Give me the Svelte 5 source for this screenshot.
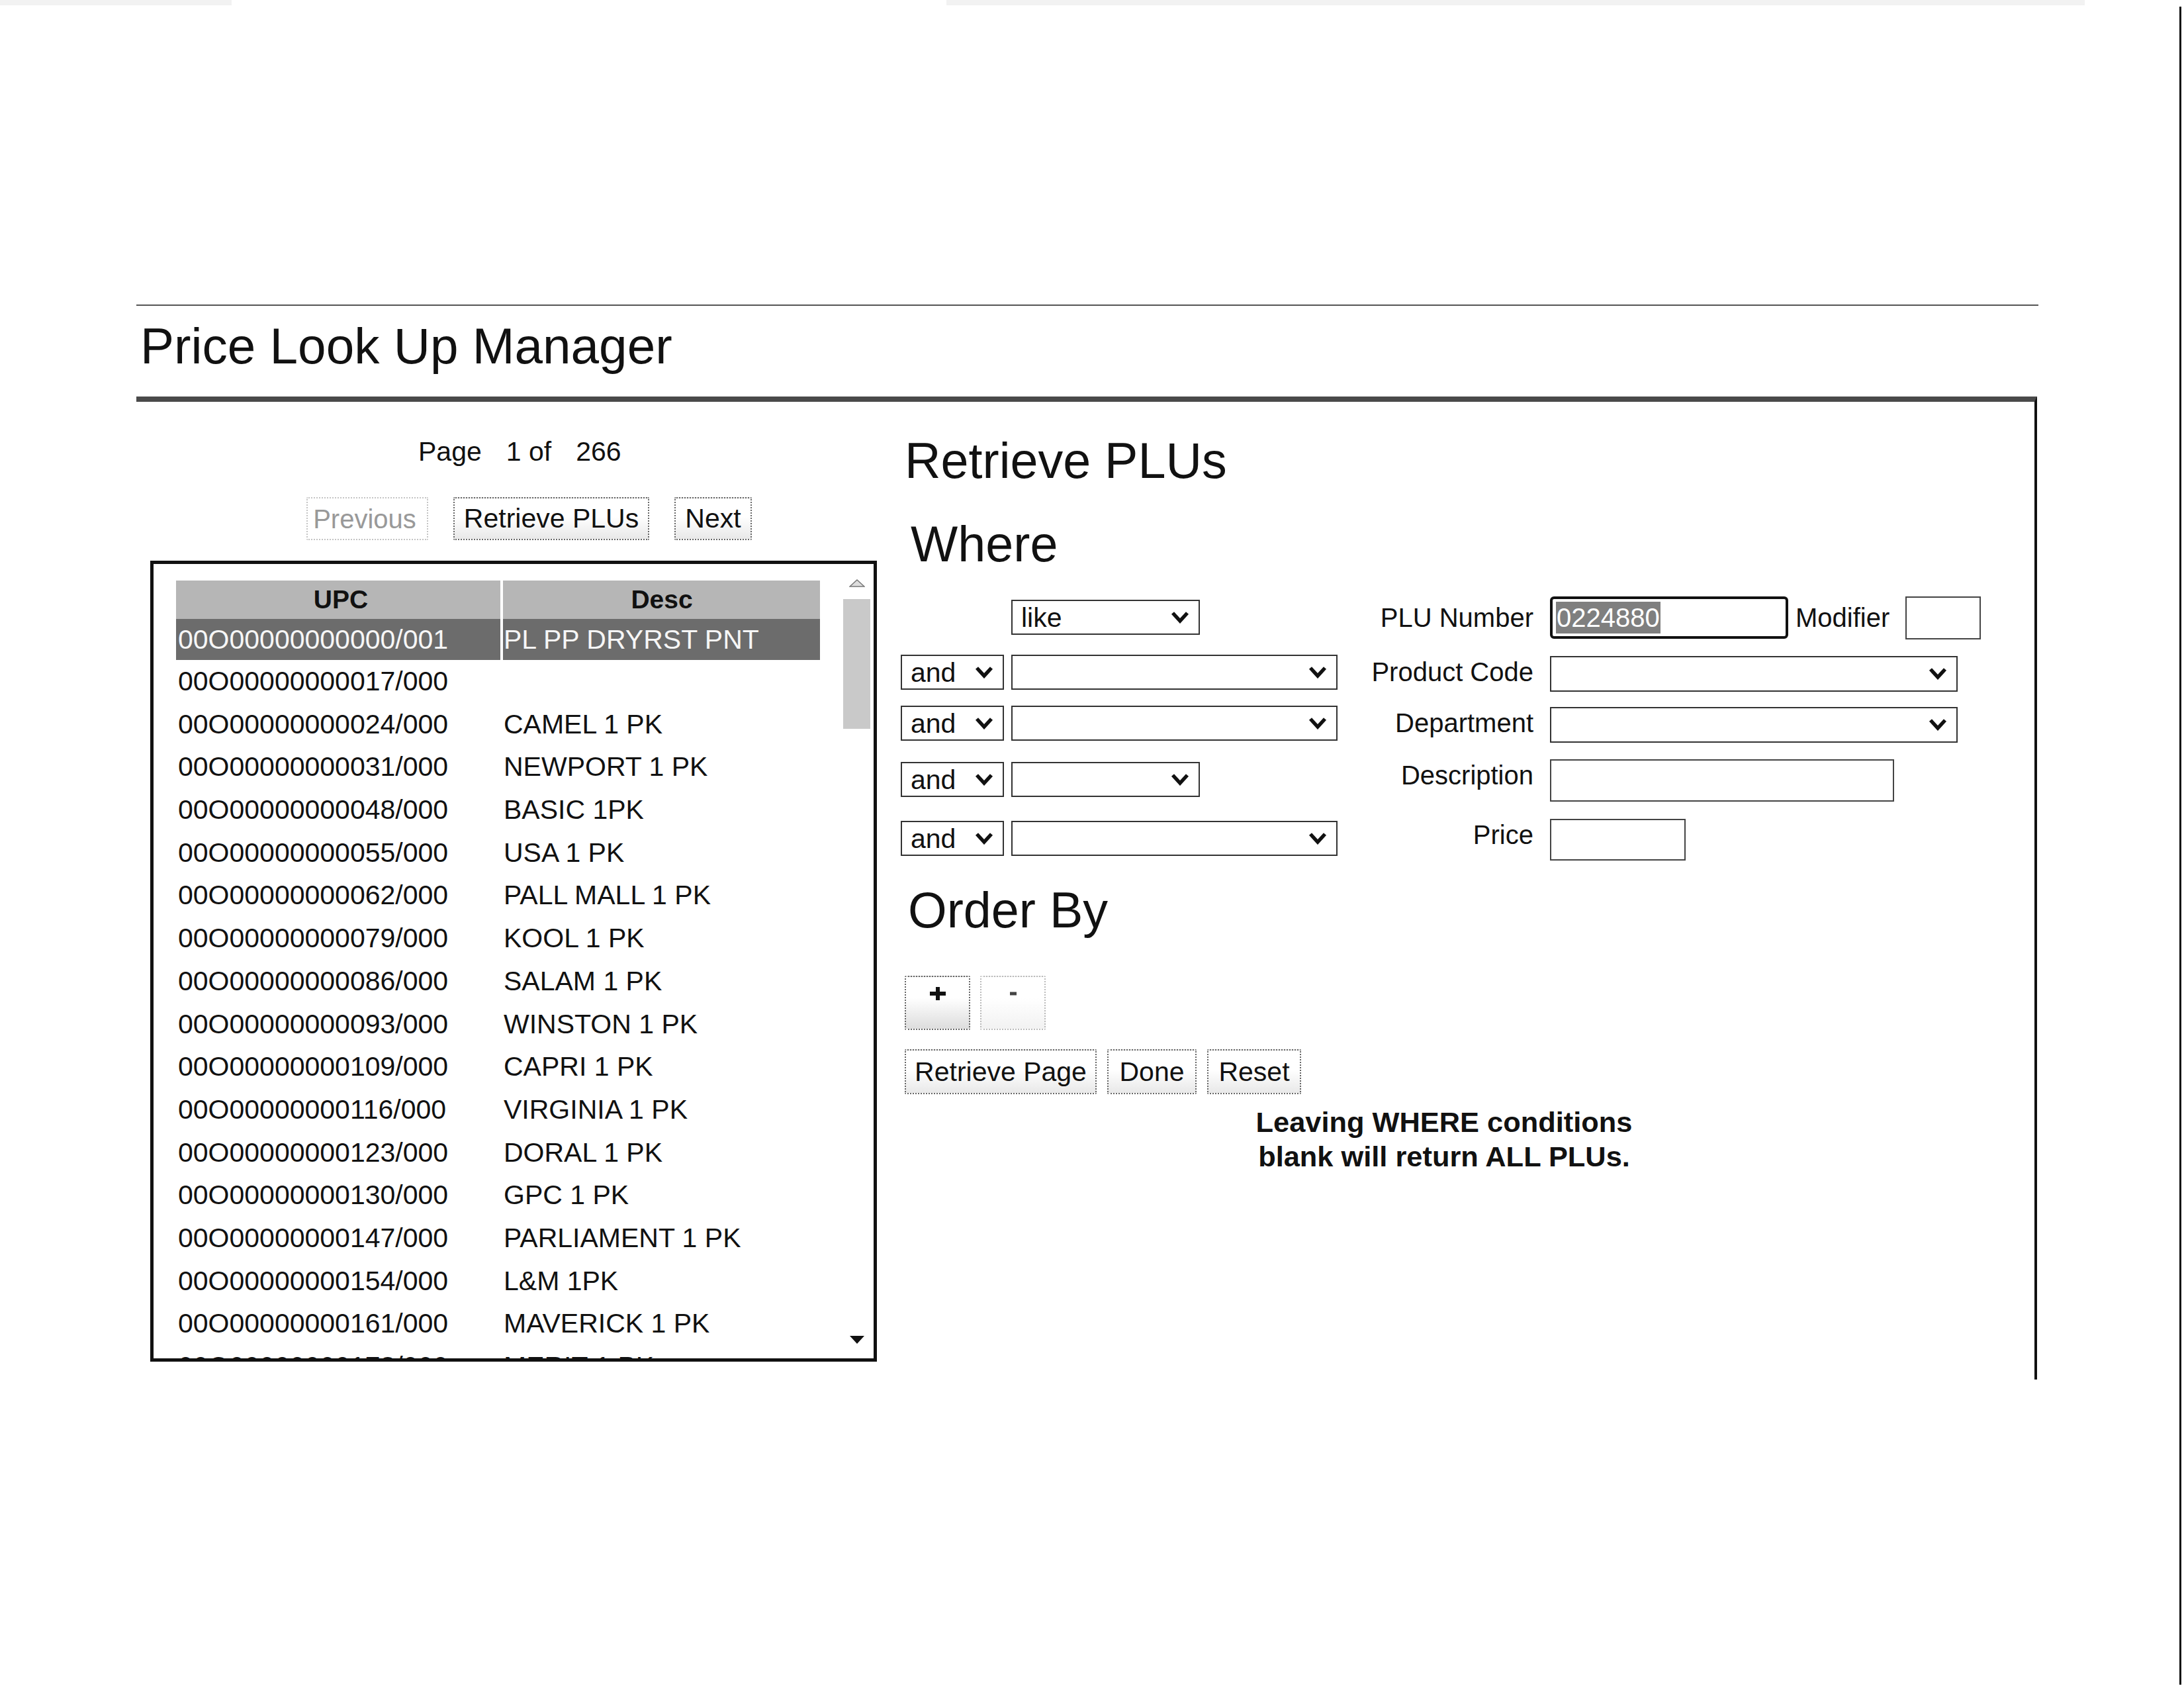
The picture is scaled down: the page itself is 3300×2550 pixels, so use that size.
<script>
  const rows = [
    ["00O00000000000/001", "PL PP DRYRST PNT"],
    ["00O00000000017/000", ""],
    ["00O00000000024/000", "CAMEL 1 PK"],
    ["00O00000000031/000", "NEWPORT 1 PK"],
    ["00O00000000048/000", "BASIC 1PK"],
    ["00O00000000055/000", "USA 1 PK"],
    ["00O00000000062/000", "PALL MALL 1 PK"],
    ["00O00000000079/000", "KOOL 1 PK"],
    ["00O00000000086/000", "SALAM 1 PK"],
    ["00O00000000093/000", "WINSTON 1 PK"],
    ["00O00000000109/000", "CAPRI 1 PK"],
    ["00O00000000116/000", "VIRGINIA 1 PK"],
    ["00O00000000123/000", "DORAL 1 PK"],
    ["00O00000000130/000", "GPC 1 PK"],
    ["00O00000000147/000", "PARLIAMENT 1 PK"],
    ["00O00000000154/000", "L&M 1PK"],
    ["00O00000000161/000", "MAVERICK 1 PK"],
    ["00O00000000178/000", "MERIT 1 PK"]
  ];

  // left side of the WHERE block: joiner + operator width
  const conditions = [
    { joiner: false, op: "like", size: "mid" },
    { joiner: true, op: "", size: "long" },
    { joiner: true, op: "", size: "long" },
    { joiner: true, op: "", size: "mid" },
    { joiner: true, op: "", size: "long" }
  ];
</script>

{#snippet dropdown(value, size)}
  <div class="dropdown {size}">
    <select>
      <option>{value}</option>
    </select>
    <svg class="chevron" viewBox="0 0 28 19" aria-hidden="true">
      <path d="M3 3 L14 15 L25 3" />
    </svg>
  </div>
{/snippet}

<div class="noise">
  <span class="noise-a"></span>
  <span class="noise-b"></span>
</div>

<div class="sheet">
  <div class="thin-rule"></div>
  <h1>Price Look Up Manager</h1>

  <div class="panel">
    <section class="left">
      <div class="pager">
        <span>Page</span>
        <span>1 of</span>
        <span>266</span>
      </div>
      <div class="pager-buttons">
        <button class="btn b-prev" disabled>Previous</button>
        <button class="btn b-plus-wide">Retrieve PLUs</button>
        <button class="btn b-next">Next</button>
      </div>

      <div class="listbox">
        <div class="list">
          <div class="row head">
            <div>UPC</div>
            <div>Desc</div>
          </div>
          {#each rows as row, i}
            <div class="row" class:selected={i === 0}>
              <div>{row[0]}</div>
              <div>{row[1]}</div>
            </div>
          {/each}
        </div>
        <div class="scrollbar">
          <svg class="arrow" viewBox="0 0 24 12" aria-hidden="true">
            <path class="up" d="M12 1 L23 11 L1 11 Z" />
          </svg>
          <div class="thumb"></div>
          <svg class="arrow down" viewBox="0 0 24 14" aria-hidden="true">
            <path d="M1 1 L23 1 L12 13 Z" />
          </svg>
        </div>
      </div>
    </section>

    <section class="right">
      <h2 class="h-retrieve">Retrieve PLUs</h2>
      <h2 class="h-where">Where</h2>

      <div class="form">
        <div class="conditions">
          {#each conditions as c}
            {#if c.joiner}
              {@render dropdown("and", "joiner")}
            {:else}
              <div></div>
            {/if}
            {@render dropdown(c.op, c.size)}
          {/each}
        </div>

        <div class="fields">
          <label class="first">PLU Number</label>
          <div class="plu-line">
            <div class="input focused" role="textbox">
              <span class="picked">0224880</span>
            </div>
            <label class="first modifier">Modifier</label>
            <input class="input modifier-box" />
          </div>

          <label>Product Code</label>
          {@render dropdown("", "field")}

          <label>Department</label>
          {@render dropdown("", "field")}

          <label>Description</label>
          <input class="input desc-box" />

          <label>Price</label>
          <input class="input price-box" />
        </div>
      </div>

      <h2 class="h-order">Order By</h2>

      <div class="order-buttons">
        <button class="btn square">
          <svg viewBox="0 0 28 22" aria-hidden="true"><path d="M14 1 V21 M2 11 H26" /></svg>
        </button>
        <button class="btn square faint">
          <svg viewBox="0 0 28 22" aria-hidden="true"><path class="minus" d="M9 11 H19" /></svg>
        </button>
      </div>

      <div class="actions">
        <button class="btn b-page">Retrieve Page</button>
        <button class="btn b-done">Done</button>
        <button class="btn b-reset">Reset</button>
      </div>

      <p class="note">Leaving WHERE conditions<br />blank will return ALL PLUs.</p>
    </section>
  </div>
</div>

<style>
  :global(body) {
    margin: 0;
    background: #fff;
    color: #111;
    font-family: "Liberation Sans", Arial, sans-serif;
  }

  .noise {
    display: flex;
    height: 8px;
    margin-bottom: 2px;
  }
  .noise-a {
    width: 350px;
    background: #f2f2f2;
  }
  .noise-b {
    width: 1720px;
    margin-left: 1080px;
    background: #f2f2f2;
  }

  .sheet {
    box-sizing: border-box;
    width: 3296px;
    height: 2535px;
    padding: 450px 0 0 206px;
    border-right: 3px solid #111;
  }

  .thin-rule {
    width: 2874px;
    height: 2px;
    background: #555;
  }

  h1 {
    margin: 17px 0 32px;
    font-size: 76.5px;
    font-weight: 400;
    line-height: 88px;
    padding-left: 6px;
  }

  h2 {
    margin: 0;
    font-size: 75.5px;
    font-weight: 400;
    line-height: 88px;
  }

  .panel {
    box-sizing: border-box;
    display: flex;
    width: 2872px;
    height: 1485px;
    border-top: 8px solid #4a4a4a;
    border-right: 4px solid #111;
  }

  .left {
    width: 1122px;
    padding-top: 51px;
    padding-left: 21px;
    box-sizing: border-box;
  }

  .pager {
    display: flex;
    gap: 37px;
    margin-left: 405px;
    font-size: 41px;
    line-height: 48px;
  }

  .pager-buttons {
    display: flex;
    gap: 38px;
    margin: 45px 0 31px 236px;
  }

  .btn {
    box-sizing: border-box;
    height: 65px;
    padding: 0;
    border: 2px dotted #666;
    border-radius: 2px;
    background: linear-gradient(#fff 45%, #e8e8e8);
    color: #111;
    font-family: inherit;
    font-size: 41px;
    line-height: 1;
  }
  .btn:disabled {
    border-color: #c4c4c4;
    color: #999;
    background: #fff;
  }
  .b-prev { width: 184px; padding-right: 8px; font-size: 40px; }
  .b-plus-wide { width: 296px; }
  .b-next { width: 117px; }
  .b-page { width: 290px; }
  .b-done { width: 135px; }
  .b-reset { width: 142px; }

  .listbox {
    box-sizing: border-box;
    display: flex;
    width: 1098px;
    height: 1210px;
    padding: 25px 0 0 34px;
    border: 5px solid #111;
    overflow: hidden;
  }

  .list {
    width: 973px;
    flex: none;
  }

  .row {
    display: grid;
    grid-template-columns: 490px 479px;
    column-gap: 4px;
    height: 64.7px;
    font-size: 41px;
    line-height: 64.7px;
    white-space: nowrap;
  }
  .row > div {
    padding-left: 3px;
  }
  .row > div + div {
    padding-left: 1px;
  }

  .head {
    height: 55px;
    margin-bottom: 3px;
    font-size: 39px;
    font-weight: 700;
    line-height: 58px;
    text-align: center;
  }
  .head > div {
    background: #b6b6b6;
  }
  .head > div:first-child {
    padding-left: 8px;
  }

  .selected {
    height: 62px;
    color: #f6f6f6;
    line-height: 62px;
  }
  .selected > div {
    background: #6c6c6c;
  }

  .scrollbar {
    display: flex;
    flex-direction: column;
    align-items: center;
    flex: none;
    width: 41px;
    height: 1173px;
    margin-left: 35px;
    margin-top: -2px;
  }
  .arrow {
    width: 24px;
    height: 12px;
    flex: none;
  }
  .arrow .up {
    fill: #ddd;
    stroke: #777;
    stroke-width: 1.5;
  }
  .arrow.down {
    height: 14px;
    margin-top: 916px;
  }
  .arrow.down path {
    fill: #111;
  }
  .thumb {
    flex: none;
    width: 41px;
    height: 196px;
    margin-top: 18px;
    background: #c9c9c9;
  }

  .right {
    box-sizing: border-box;
    flex: 1;
    padding-top: 45px;
    padding-left: 33px;
  }

  .h-retrieve { margin-left: 6px; }
  .h-where { margin: 38px 0 0 15px; }
  .h-order { margin: 31px 0 0 11px; }

  .form {
    display: flex;
    margin-top: 35px;
  }

  .conditions {
    display: grid;
    grid-template-columns: 156px auto;
    grid-template-rows: 83px 77px 85px 89px 53px;
    column-gap: 11px;
    align-items: start;
    justify-items: start;
    width: 660px;
    padding-top: 5px;
  }

  .fields {
    display: grid;
    grid-template-columns: 277px auto;
    grid-template-rows: 90px 77px 79px 90px 63px;
    column-gap: 25px;
    align-items: start;
    justify-items: start;
    margin-left: 19px;
  }

  label {
    justify-self: end;
    font-size: 40px;
    line-height: 48px;
    white-space: nowrap;
  }
  label.first {
    margin-top: 8px;
  }

  .dropdown {
    position: relative;
    box-sizing: border-box;
    height: 53px;
  }
  .dropdown select {
    box-sizing: border-box;
    width: 100%;
    height: 100%;
    padding: 0 0 0 13px;
    border: 2px solid #333;
    border-radius: 0;
    background: #fff;
    color: #111;
    font-family: inherit;
    font-size: 41px;
    appearance: none;
  }
  .joiner { width: 156px; }
  .mid { width: 285px; }
  .long { width: 493px; }
  .field { width: 616px; height: 54px; }

  .chevron {
    position: absolute;
    top: 17px;
    right: 16px;
    width: 28px;
    height: 19px;
    pointer-events: none;
  }
  .chevron path {
    fill: none;
    stroke: #111;
    stroke-width: 5.5;
  }

  .plu-line {
    display: flex;
    align-items: flex-start;
  }

  .input {
    box-sizing: border-box;
    display: block;
    padding: 0;
    border: 2px solid #444;
    border-radius: 0;
    background: #fff;
  }
  .focused {
    display: flex;
    align-items: center;
    width: 360px;
    height: 64px;
    padding-left: 5px;
    border: 4px solid #111;
    border-radius: 6px;
  }
  .picked {
    height: 48px;
    padding: 0 1px;
    background: #7f7f7f;
    color: #fff;
    font-size: 40px;
    line-height: 48px;
  }
  .modifier { margin-left: 11px; }
  .modifier-box {
    width: 114px;
    height: 65px;
    margin-left: 24px;
  }
  .desc-box { width: 520px; height: 64px; }
  .price-box { width: 205px; height: 63px; }

  .order-buttons {
    display: flex;
    gap: 15px;
    margin: 55px 0 0 6px;
  }
  .square {
    width: 99px;
    height: 82px;
    padding-bottom: 28px;
    background: linear-gradient(#fff 40%, #ddd);
  }
  .square svg {
    display: block;
    width: 28px;
    height: 22px;
    margin: auto;
  }
  .square path {
    fill: none;
    stroke: #111;
    stroke-width: 6;
  }
  .square path.minus {
    stroke: #444;
    stroke-width: 5;
  }
  .faint {
    border-color: #bbb;
    background: linear-gradient(#fff 40%, #f2f2f2);
  }

  .actions {
    display: flex;
    gap: 16px;
    margin: 29px 0 0 6px;
  }
  .actions .btn {
    height: 68px;
  }

  .note {
    width: 700px;
    margin: 16px 0 0 471px;
    font-size: 43.4px;
    font-weight: 700;
    line-height: 52px;
    text-align: center;
  }
</style>
